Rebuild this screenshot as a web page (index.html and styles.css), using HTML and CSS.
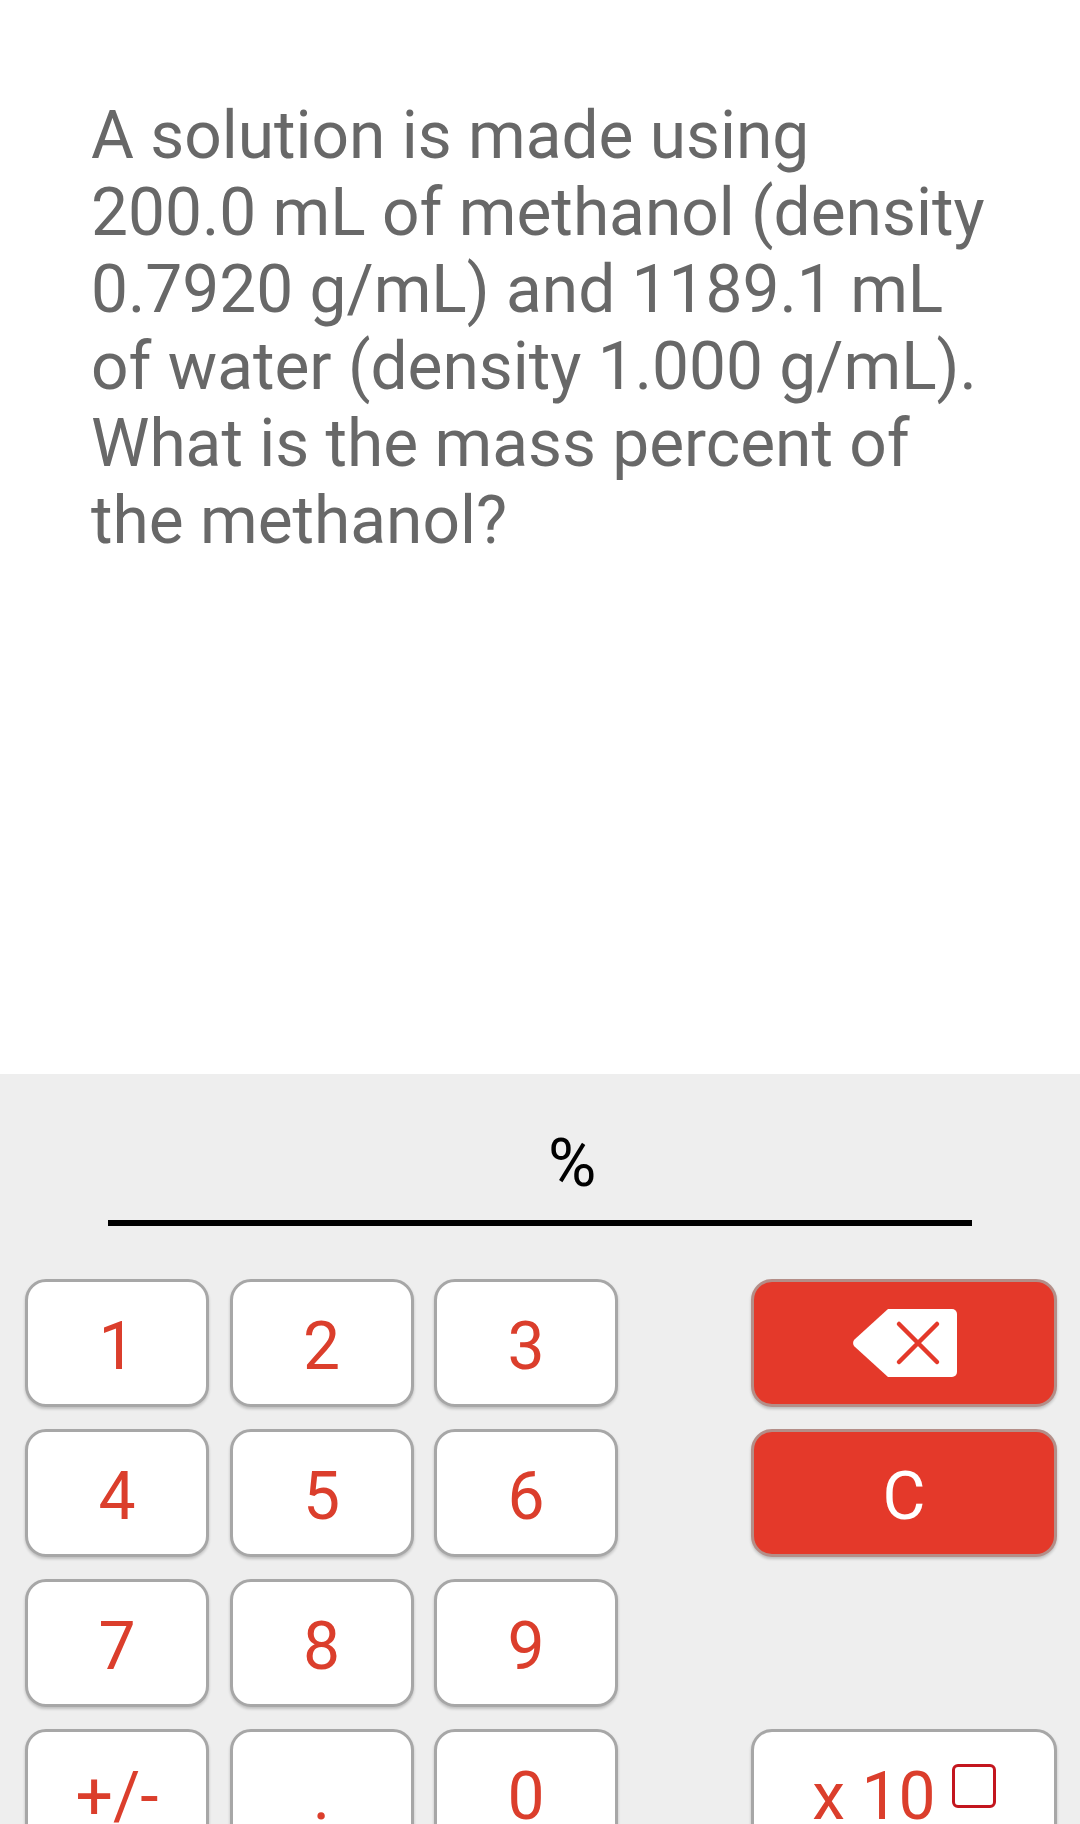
FILE: index.html
```html
<!DOCTYPE html>
<html lang="en">
<head>
<meta charset="utf-8">
<title>Mass percent question</title>
<link rel="stylesheet" href="styles.css">
</head>
<body>
<main class="screen">
  <section class="question">
    <p class="question-text">A solution is made using<br>200.0 mL of methanol (density<br>0.7920 g/mL) and 1189.1 mL<br>of water (density 1.000 g/mL).<br>What is the mass percent of<br>the methanol?</p>
  </section>
  <section class="panel">
    <div class="answer-row"><span class="unit">%</span></div>
    <div class="rule"></div>
    <div class="keypad">
      <button class="key">1</button>
      <button class="key">2</button>
      <button class="key">3</button>
      <span class="spacer"></span>
      <button class="key key-red" aria-label="backspace">
        <svg class="bksp" width="105" height="68" viewBox="0 0 105 68">
          <path d="M36 0 H100 a5 5 0 0 1 5 5 V63 a5 5 0 0 1 -5 5 H36 L2.5 37.5 a5 5 0 0 1 0 -7 Z" fill="#ffffff"/>
          <path d="M47 15 L85 53 M85 15 L47 53" stroke="#e4392a" stroke-width="4.5" stroke-linecap="round" fill="none"/>
        </svg>
      </button>
      <button class="key">4</button>
      <button class="key">5</button>
      <button class="key">6</button>
      <span class="spacer"></span>
      <button class="key key-red key-c">C</button>
      <button class="key">7</button>
      <button class="key">8</button>
      <button class="key">9</button>
      <span class="spacer"></span>
      <span class="spacer"></span>
      <button class="key">+/-</button>
      <button class="key">.</button>
      <button class="key">0</button>
      <span class="spacer"></span>
      <button class="key key-exp"><span>x 10</span><span class="exp-box"></span></button>
    </div>
  </section>
</main>
</body>
</html>
```

FILE: styles.css
```css
html, body {
  margin: 0;
  padding: 0;
  background: #ffffff;
  overflow: hidden;
}

.screen {
  width: 1080px;
  font-family: Roboto, "Liberation Sans", sans-serif;
}

.question {
  height: 1074px;
  box-sizing: border-box;
  padding: 97px 0 0 91px;
  background: #ffffff;
}

.question-text {
  margin: 0;
  font-size: 65.8px;
  line-height: 77px;
  color: #686868;
  white-space: nowrap;
}

.panel {
  background: #eeeeee;
  height: 750px;
  padding-top: 57px;
  box-sizing: border-box;
}

.answer-row {
  margin: 0 108px;
  padding-left: 440px;
  height: 66px;
}

.unit {
  font-size: 66px;
  line-height: 66px;
  color: #000000;
}

.rule {
  margin: 23px 108px 0 108px;
  height: 6px;
  background: #000000;
}

.keypad {
  margin-top: 53px;
  padding: 0 23px 0 25px;
  display: grid;
  grid-template-columns: 184px 184px 184px 1fr 306px;
  grid-auto-rows: 128px;
  column-gap: 20.5px;
  row-gap: 22px;
}

.key {
  box-sizing: border-box;
  margin: 0;
  padding: 8px 0 0 0;
  border: 3px solid #a7a7a7;
  border-radius: 21px;
  background: #ffffff;
  box-shadow: 0 2px 3px rgba(0, 0, 0, 0.2);
  display: flex;
  align-items: center;
  justify-content: center;
  font-family: Roboto, "Liberation Sans", sans-serif;
  font-size: 66px;
  line-height: 66px;
  color: #db3e2c;
}

.key-red {
  background: #e4392a;
  border-color: #b48e88;
  color: #ffffff;
}

.key-red .bksp {
  margin-top: -8px;
  display: block;
}

.key-exp {
  gap: 16px;
}

.exp-box {
  width: 44px;
  height: 44px;
  box-sizing: border-box;
  border: 3.5px solid #c3161e;
  border-radius: 6px;
  margin-bottom: 23px;
}
```
